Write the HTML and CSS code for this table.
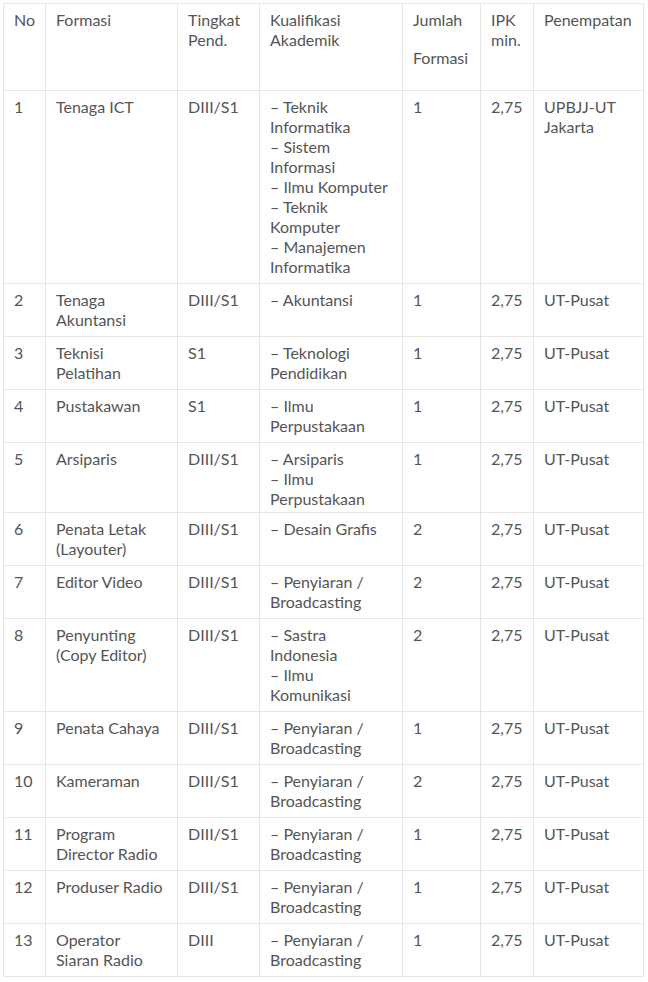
FILE: index.html
```html
<!DOCTYPE html>
<html lang="id">
<head>
<meta charset="utf-8">
<title>Formasi</title>
<link rel="stylesheet" href="styles.css">
</head>
<body>
<table class="formasi">
  <colgroup>
    <col class="c-no"><col class="c-formasi"><col class="c-tingkat"><col class="c-kual"><col class="c-jumlah"><col class="c-ipk"><col class="c-pen">
  </colgroup>
  <thead>
    <tr>
      <th>No</th>
      <th>Formasi</th>
      <th>Tingkat Pend.</th>
      <th>Kualifikasi Akademik</th>
      <th><div class="p1">Jumlah</div><div class="p2">Formasi</div></th>
      <th>IPK min.</th>
      <th>Penempatan</th>
    </tr>
  </thead>
  <tbody>
    <tr>
      <td>1</td><td>Tenaga ICT</td><td>DIII/S1</td>
      <td>– Teknik Informatika<br>– Sistem Informasi<br>– Ilmu Komputer<br>– Teknik Komputer<br>– Manajemen Informatika</td>
      <td>1</td><td>2,75</td><td>UPBJJ-UT Jakarta</td>
    </tr>
    <tr>
      <td>2</td><td>Tenaga Akuntansi</td><td>DIII/S1</td><td>– Akuntansi</td><td>1</td><td>2,75</td><td>UT-Pusat</td>
    </tr>
    <tr>
      <td>3</td><td>Teknisi Pelatihan</td><td>S1</td><td>– Teknologi Pendidikan</td><td>1</td><td>2,75</td><td>UT-Pusat</td>
    </tr>
    <tr>
      <td>4</td><td>Pustakawan</td><td>S1</td><td>– Ilmu Perpustakaan</td><td>1</td><td>2,75</td><td>UT-Pusat</td>
    </tr>
    <tr class="tight">
      <td>5</td><td>Arsiparis</td><td>DIII/S1</td><td>– Arsiparis<br>– Ilmu Perpustakaan</td><td>1</td><td>2,75</td><td>UT-Pusat</td>
    </tr>
    <tr>
      <td>6</td><td>Penata Letak (Layouter)</td><td>DIII/S1</td><td>– Desain Grafis</td><td>2</td><td>2,75</td><td>UT-Pusat</td>
    </tr>
    <tr>
      <td>7</td><td>Editor Video</td><td>DIII/S1</td><td>– Penyiaran / Broadcasting</td><td>2</td><td>2,75</td><td>UT-Pusat</td>
    </tr>
    <tr>
      <td>8</td><td>Penyunting (Copy Editor)</td><td>DIII/S1</td><td>– Sastra Indonesia<br>– Ilmu Komunikasi</td><td>2</td><td>2,75</td><td>UT-Pusat</td>
    </tr>
    <tr>
      <td>9</td><td>Penata Cahaya</td><td>DIII/S1</td><td>– Penyiaran / Broadcasting</td><td>1</td><td>2,75</td><td>UT-Pusat</td>
    </tr>
    <tr>
      <td>10</td><td>Kameraman</td><td>DIII/S1</td><td>– Penyiaran / Broadcasting</td><td>2</td><td>2,75</td><td>UT-Pusat</td>
    </tr>
    <tr>
      <td>11</td><td>Program Director Radio</td><td>DIII/S1</td><td>– Penyiaran / Broadcasting</td><td>1</td><td>2,75</td><td>UT-Pusat</td>
    </tr>
    <tr>
      <td>12</td><td>Produser Radio</td><td>DIII/S1</td><td>– Penyiaran / Broadcasting</td><td>1</td><td>2,75</td><td>UT-Pusat</td>
    </tr>
    <tr>
      <td>13</td><td>Operator<br>Siaran Radio</td><td>DIII</td><td>– Penyiaran / Broadcasting</td><td>1</td><td>2,75</td><td>UT-Pusat</td>
    </tr>
  </tbody>
</table>
</body>
</html>
```
FILE: styles.css
```css
html, body {
  margin: 0;
  padding: 0;
  background: #fff;
}
body {
  padding: 3px 0 0 3px;
  font-family: Lato, "Liberation Sans", sans-serif;
  font-size: 16px;
  line-height: 20px;
  color: #555;
}
.formasi {
  border-collapse: collapse;
  table-layout: fixed;
  width: 640px;
}
.c-no { width: 42px; }
.c-formasi { width: 132px; }
.c-tingkat { width: 82px; }
.c-kual { width: 143px; }
.c-jumlah { width: 78px; }
.c-ipk { width: 53px; }
.c-pen { width: 110px; }
.formasi th,
.formasi td {
  border: 1px solid #e6e6e6;
  text-align: left;
  vertical-align: top;
  font-weight: normal;
  padding: 6px 10px 6px 10px;
}
.formasi .p1 { margin-bottom: 18px; }
.formasi .p2 { margin-bottom: 16px; }
.formasi tr.tight td { padding-bottom: 3px; }
```
